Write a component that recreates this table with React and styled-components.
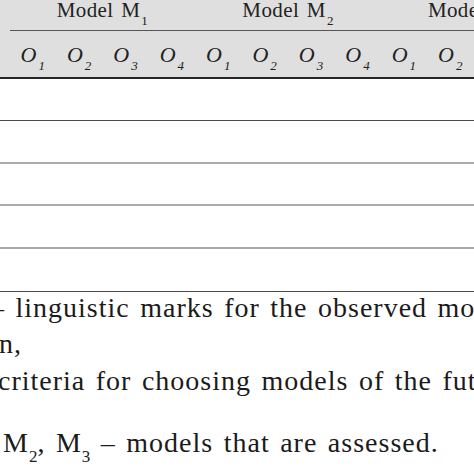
import React from "react";
import styled, { createGlobalStyle } from "styled-components";

const Global = createGlobalStyle`
  html, body { margin: 0; padding: 0; background: #ffffff; }
  body { overflow: hidden; }
`;

const Page = styled.div`
  width: 474px;
  height: 474px;
  overflow: hidden;
  background: #ffffff;
  color: #1b1b1b;
  font-family: "Liberation Serif", "Times New Roman", serif;
`;

const Table = styled.div`
  width: 474px;
  overflow: hidden;
`;

const Header = styled.div`
  display: grid;
  grid-template-columns: 9.5px repeat(12, 46.4px);
  grid-template-rows: 31px 46px;
  width: max-content;
  min-width: 474px;
  background: #dfdfdf;
  border-bottom: 2px solid #262626;
`;

const Stub = styled.div`
  grid-row: 1 / span 2;
`;

const GroupCell = styled.div`
  grid-column: span 4;
  box-sizing: border-box;
  border-bottom: 1px solid #555555;
  text-align: center;
  font-size: 21px;
  line-height: 21px;
  padding-top: 0px;
  letter-spacing: 0.4px;
  word-spacing: 2px;
  white-space: nowrap;
  color: #222222;
`;

const OCell = styled.div`
  box-sizing: border-box;
  padding-top: 13px;
  text-align: center;
  font-size: 22px;
  line-height: 22px;
  font-style: italic;
  white-space: nowrap;
  color: #222222;
`;

const Sub = styled.span`
  font-size: ${(p) => p.$size}px;
  line-height: 1;
  vertical-align: ${(p) => -p.$drop}px;
  margin-left: ${(p) => p.$gap || 0}px;
  letter-spacing: 0;
  font-style: ${(p) => (p.$italic ? "italic" : "normal")};
`;

const Row = styled.div`
  box-sizing: border-box;
  height: ${(p) => p.$h}px;
  border-bottom: ${(p) => (p.$rule === "dark" ? "1px solid #4a4a4a" : "2px solid #a9a9a9")};
`;

const Notes = styled.div`
  margin-top: -2px;
  width: 474px;
  overflow: hidden;
  font-size: 28px;
  line-height: 36.5px;
  letter-spacing: 1px;
  word-spacing: 2.5px;
`;

const Line = styled.div`
  white-space: nowrap;
  margin-left: ${(p) => p.$offset}px;
  margin-top: ${(p) => p.$top || 0}px;
`;

const groups = ["1", "2", "3"];
const obs = ["1", "2", "3", "4"];
const rows = [
  { h: 42, rule: "dark" },
  { h: 42.5, rule: "light" },
  { h: 42.5, rule: "light" },
  { h: 42.5, rule: "light" },
  { h: 43, rule: "dark" },
];

export default function App() {
  return (
    <Page>
      <Global />
      <Table>
        <Header>
          <Stub />
          {groups.map((g) => (
            <GroupCell key={g}>
              Model M<Sub $size={13} $drop={8} $gap={1}>{g}</Sub>
            </GroupCell>
          ))}
          {groups.map((g) =>
            obs.map((o) => (
              <OCell key={g + o}>
                O<Sub $size={13} $drop={8} $gap={2} $italic>{o}</Sub>
              </OCell>
            ))
          )}
        </Header>
        {rows.map((r, i) => (
          <Row key={i} $h={r.h} $rule={r.rule} />
        ))}
      </Table>
      <Notes>
        <Line $offset={-10}>– linguistic marks for the observed model of</Line>
        <Line $offset={-1}>n,</Line>
        <Line $offset={-2}>criteria for choosing models of the future</Line>
        <Line $offset={3} $top={26}>
          M<Sub $size={17} $drop={10}>2</Sub>, M<Sub $size={17} $drop={10}>3</Sub> – models that are assessed.
        </Line>
      </Notes>
    </Page>
  );
}
